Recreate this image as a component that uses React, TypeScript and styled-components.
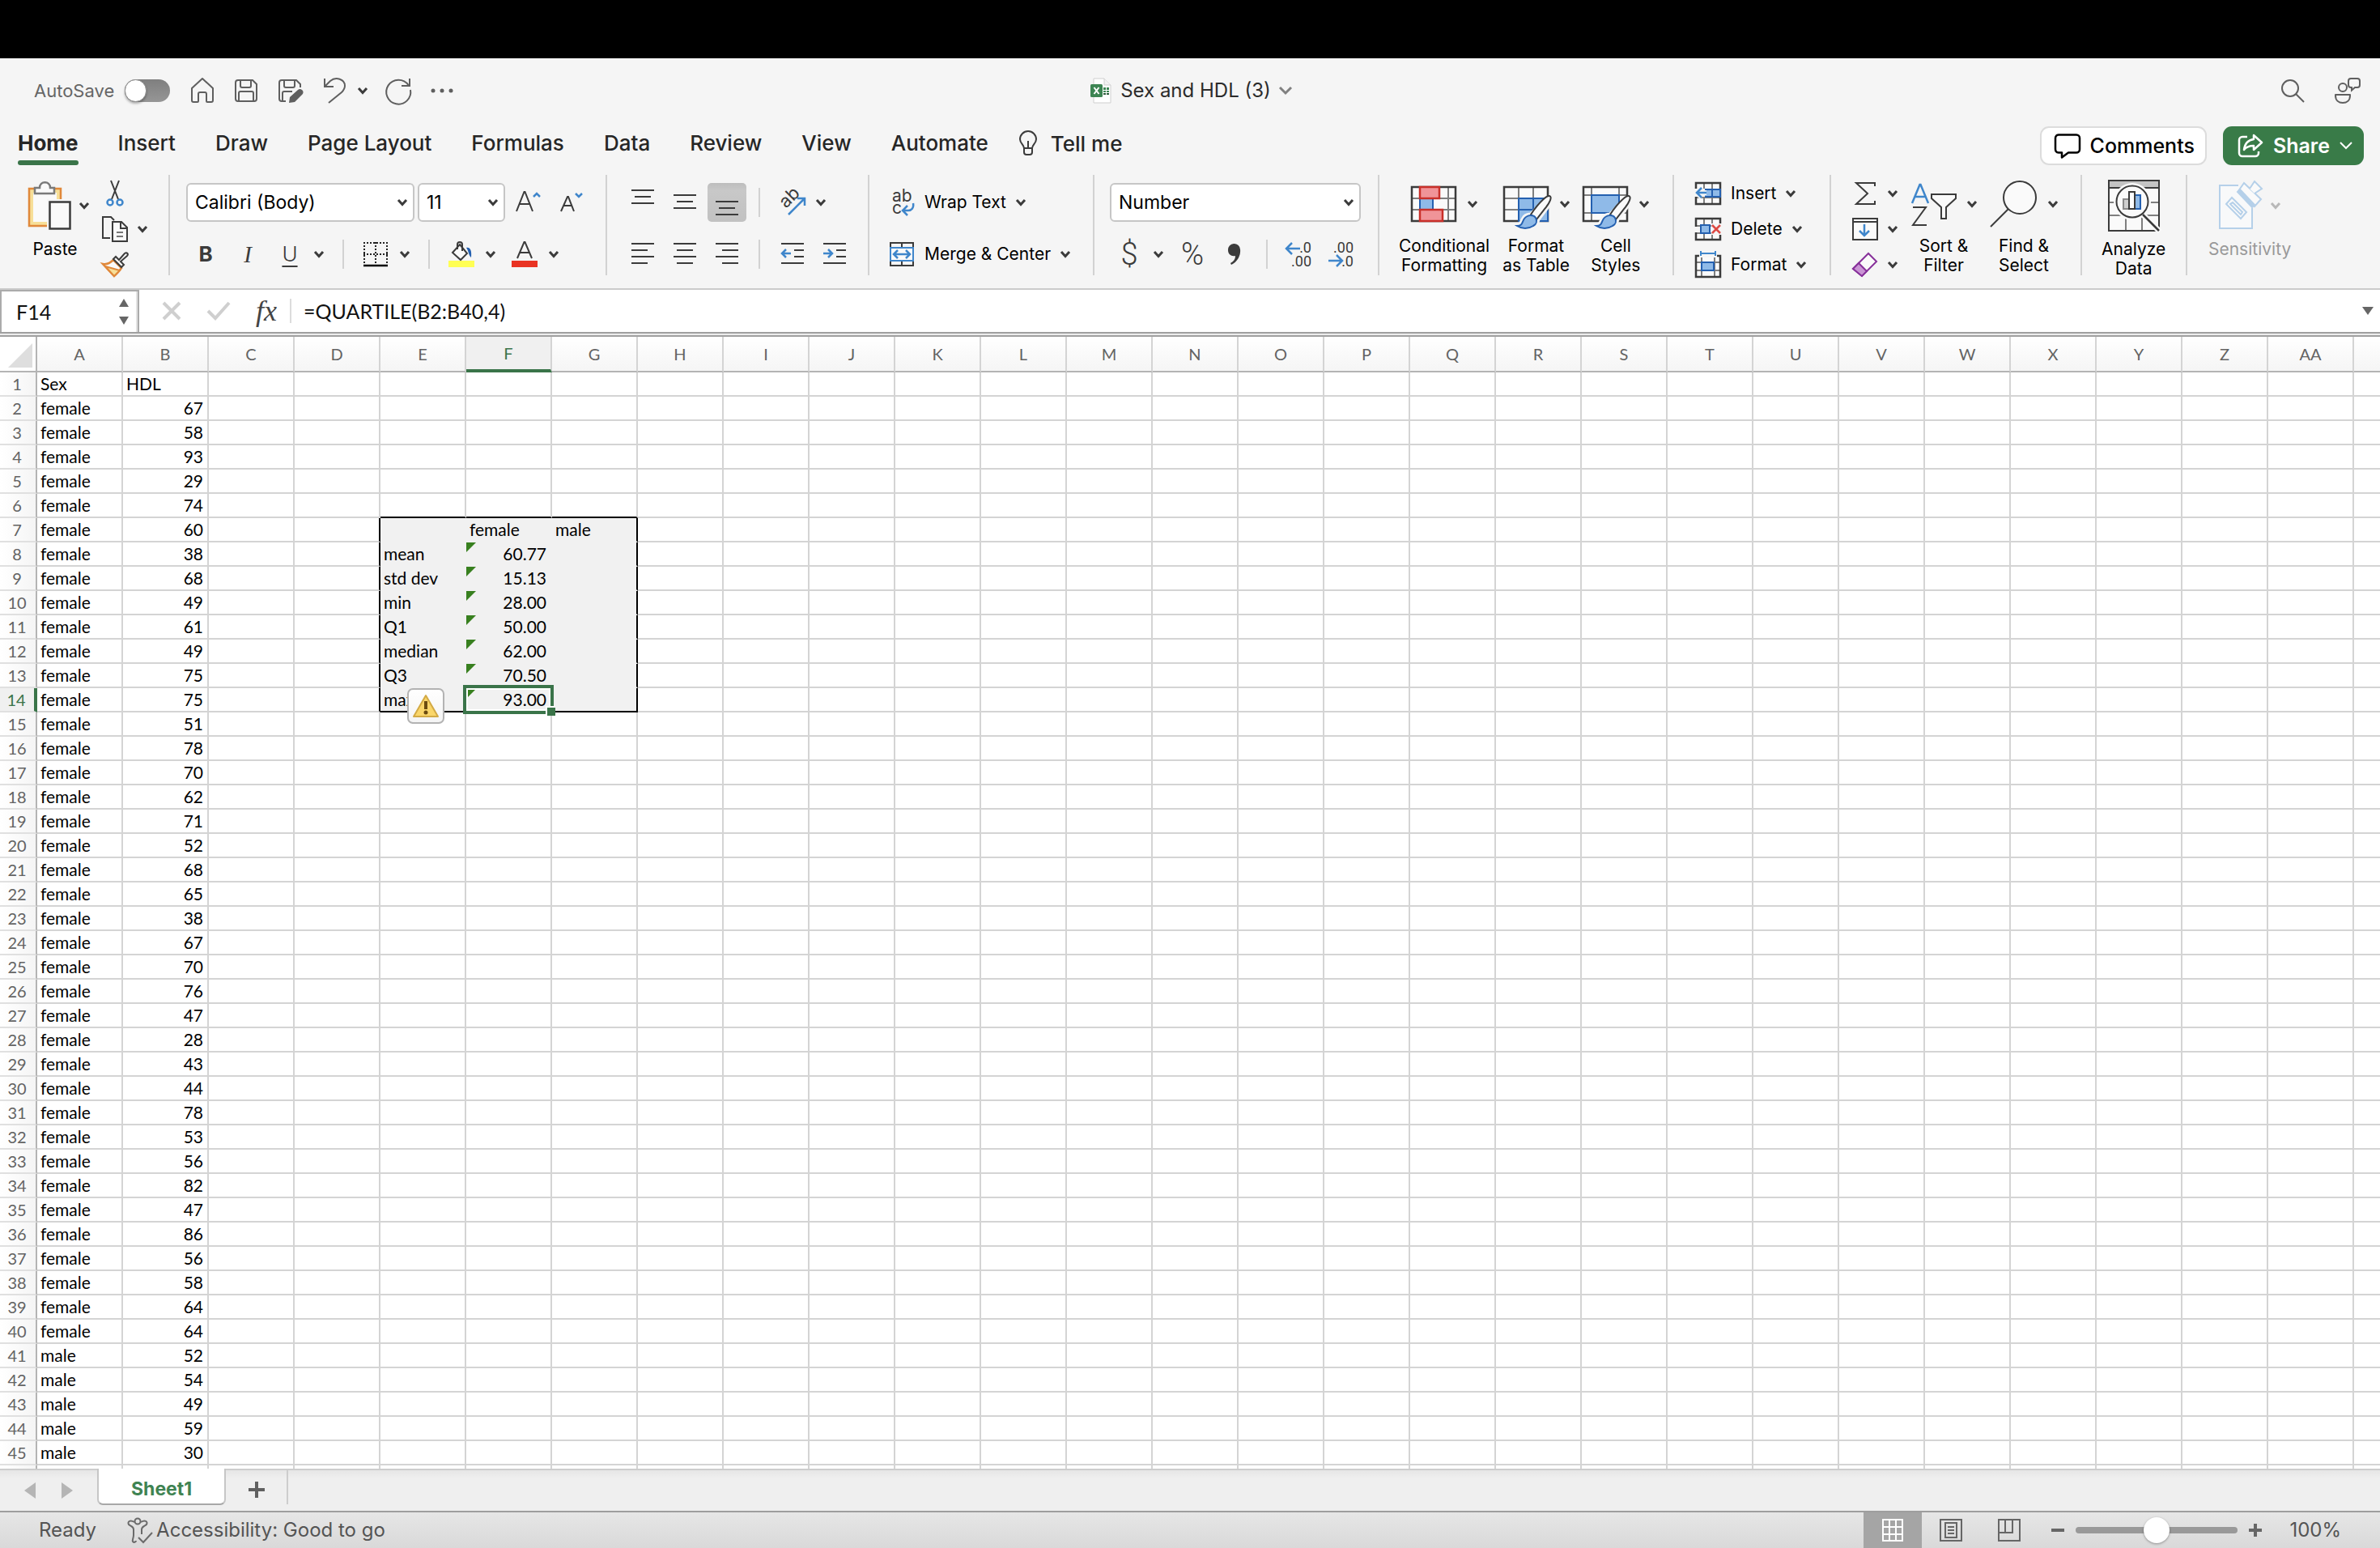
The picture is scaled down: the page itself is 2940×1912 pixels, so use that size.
import React, { ReactNode } from "react";
import styled, { createGlobalStyle, css } from "styled-components";

const INK = "#3b3b3b";
const GREEN = "#3a7449";
const BLUE = "#3f86cb";
const NAVY = "#2460b0";
const SKY = "#8fbae8";
const UI = `Inter, "Liberation Sans", sans-serif`;
const SHEET = `Lato, "Open Sans", sans-serif`;

const GlobalStyle = createGlobalStyle`
  *, *::before, *::after { box-sizing: border-box; }
  html, body { margin: 0; padding: 0; background: #000; }
  body { overflow: hidden; font-family: ${UI}; }
  button, input, select { font: inherit; margin: 0; }
  button { border: 0; padding: 0; background: none; color: inherit; }
  svg { display: block; flex: none; overflow: visible; }
`;

/* ---------- window ---------- */

const Window = styled.div`
  display: flex;
  flex-direction: column;
  height: 100vh;
  padding-top: 72px;
  background: #000;
`;

const Chrome = styled.header`
  flex: none;
  background: #f5f5f5;
  border-bottom: 2px solid #cbcbcb;
`;

const TitleBar = styled.div`
  display: grid;
  grid-template-columns: 1fr auto 1fr;
  align-items: center;
  height: 80px;
  padding: 0 24px;
`;

const QuickAccess = styled.div`
  display: flex;
  align-items: center;
  gap: 22px;
  padding-left: 18px;
`;

const AutoSave = styled.label`
  display: flex;
  align-items: center;
  gap: 13px;
  padding-right: 2px;
  font-size: 22px;
  line-height: 28px;
  color: #666;
`;

const Toggle = styled.input`
  appearance: none;
  width: 56px;
  height: 28px;
  border-radius: 14px;
  background: linear-gradient(#7f7f7f, #969696);
  &::before {
    content: "";
    display: block;
    width: 27px;
    height: 28px;
    border: 1px solid #8a8a8a;
    border-radius: 14px;
    background: #fff;
    box-shadow: 0 2px 3px rgba(0, 0, 0, 0.3);
  }
`;

const IconButton = styled.button`
  display: flex;
  align-items: center;
  gap: 14px;
`;

const DocTitle = styled.button`
  display: flex;
  align-items: center;
  gap: 10px;
  padding-left: 2px;
  font-size: 24px;
  line-height: 32px;
  color: #2b2b2b;
`;

const TitleActions = styled.div`
  display: flex;
  justify-content: flex-end;
  gap: 36px;
`;

/* ---------- ribbon tabs ---------- */

const TabRow = styled.nav`
  display: flex;
  align-items: flex-start;
  justify-content: space-between;
  padding: 4px 20px 12px 22px;
`;

const TabList = styled.div`
  display: flex;
  gap: 49px;
`;

const Tab = styled.button<{ $active?: boolean }>`
  display: flex;
  flex-direction: column;
  font-size: 26px;
  line-height: 42px;
  font-weight: ${(p) => (p.$active ? 700 : 500)};
  color: #262626;
  &::after {
    content: "";
    align-self: stretch;
    height: 6px;
    border-radius: 3px;
    background: ${(p) => (p.$active ? GREEN : "transparent")};
  }
`;

const TellMe = styled.button`
  display: flex;
  align-items: center;
  gap: 16px;
  margin-left: -12px;
  height: 42px;
  font-size: 26px;
  font-weight: 500;
  color: #262626;
`;

const Actions = styled.div`
  display: flex;
  gap: 20px;
`;

const ActionButton = styled.button<{ $primary?: boolean }>`
  display: flex;
  align-items: center;
  gap: 12px;
  height: 48px;
  padding: 0 14px 0 18px;
  border-radius: 11px;
  font-size: 25px;
  line-height: 32px;
  ${(p) =>
    p.$primary
      ? css`
          background: #397b48;
          color: #fff;
          font-weight: 600;
        `
      : css`
          background: #fff;
          color: #000;
          font-weight: 500;
          border: 2px solid #dcdcdc;
          padding: 0 13px 0 16px;
        `}
`;

/* ---------- ribbon ---------- */

const Ribbon = styled.div`
  display: flex;
  align-items: flex-start;
  height: 140px;
`;

const Group = styled.section<{ $width?: number; $pad?: number; $last?: boolean }>`
  display: flex;
  flex: none;
  width: ${(p) => (p.$width ? p.$width + "px" : "auto")};
  height: 124px;
  padding-left: ${(p) => p.$pad ?? 20}px;
  gap: 16px;
  border-right: ${(p) => (p.$last ? 0 : 2)}px solid #d2d2d2;
`;

const TwoRows = styled.div`
  display: flex;
  flex-direction: column;
  gap: 16px;
  padding-top: 10px;
`;

const ThreeRows = styled.div`
  display: flex;
  flex-direction: column;
  gap: 16px;
  padding-top: 9px;
`;

const Tools = styled.div`
  display: flex;
  align-items: center;
  gap: 4px;
  height: 48px;
`;

const ToolButton = styled.button<{ $active?: boolean }>`
  display: flex;
  align-items: center;
  gap: 14px;
  height: 48px;
  padding: 0 8px;
  border-radius: 5px;
  background: ${(p) => (p.$active ? "linear-gradient(#bdbdbd, #c8c8c8 20%, #c1c1c1)" : "none")};
  color: ${INK};
`;

const Glyph = styled.span<{ $kind: "bold" | "italic" | "underline" | "symbol" }>`
  width: 32px;
  text-align: center;
  line-height: 32px;
  ${(p) =>
    ({
      bold: css`
        font-size: 26px;
        font-weight: 700;
      `,
      italic: css`
        font-family: "Liberation Serif", serif;
        font-size: 29px;
        font-style: italic;
      `,
      underline: css`
        font-size: 26px;
        font-weight: 300;
        text-decoration: underline;
        text-decoration-thickness: 2px;
        text-underline-offset: 5px;
      `,
      symbol: css`
        font-family: Roboto, sans-serif;
        font-size: 38px;
        font-weight: 300;
      `,
    })[p.$kind]}
`;

const Divider = styled.span`
  width: 2px;
  height: 36px;
  margin: 0 11px;
  background: #d2d2d2;
`;

const RowButton = styled.button<{ $small?: boolean }>`
  display: flex;
  align-items: center;
  gap: 12px;
  height: ${(p) => (p.$small ? 28 : 48)}px;
  padding-left: ${(p) => (p.$small ? 0 : 4)}px;
  font-size: 21px;
  line-height: 24px;
  color: #000;
`;

const SmallSplit = styled.button`
  display: flex;
  align-items: center;
  gap: 12px;
  height: 28px;
`;

const BigButton = styled.button`
  display: flex;
  flex-direction: column;
  align-items: center;
  gap: 10px;
  height: 124px;
  padding-top: 6px;
  font-size: 21px;
  line-height: 24px;
  color: #000;
  &:disabled { color: #999; }
`;

const BigIcon = styled.span`
  display: flex;
  align-items: center;
  gap: 10px;
  height: 64px;
`;

const BigLabel = styled.span<{ $inset: number }>`
  padding-right: ${(p) => p.$inset}px;
`;

const SelectBox = styled.span<{ $width: number }>`
  display: grid;
  align-items: center;
  width: ${(p) => p.$width}px;
  height: 48px;
  border: 2px solid #c6c6c6;
  border-radius: 6px;
  background: #fff;
  > * { grid-area: 1 / 1; }
  > svg { justify-self: end; margin-right: 7px; pointer-events: none; }
`;

const Select = styled.select`
  appearance: none;
  width: 100%;
  height: 44px;
  padding: 0 24px 0 9px;
  border: 0;
  border-radius: 6px;
  background: transparent;
  font-size: 23px;
  color: #000;
`;

/* ---------- formula bar ---------- */

const FormulaBar = styled.div`
  display: flex;
  flex: none;
  align-items: center;
  height: 52px;
  background: #fff;
`;

const NameBox = styled.div`
  display: flex;
  align-items: center;
  justify-content: space-between;
  width: 172px;
  height: 52px;
  padding: 0 11px 0 18px;
  border: 2px solid #ababab;
  border-bottom: 0;
  box-shadow: inset -2px 0 #e2e2e2;
`;

const BarInput = styled.input<{ $width?: number }>`
  flex: ${(p) => (p.$width ? "none" : 1)};
  width: ${(p) => (p.$width ? p.$width + "px" : "auto")};
  height: 40px;
  padding: 0;
  border: 0;
  background: transparent;
  font-family: ${SHEET};
  font-size: 25px;
  color: #111;
`;

const BarTools = styled.div`
  display: flex;
  align-items: center;
  gap: 32px;
  padding: 0 16px 0 28px;
`;

const BarDivider = styled.span`
  width: 2px;
  height: 30px;
  margin-right: 15px;
  background: #dcdcdc;
`;

const Fx = styled.button`
  font-family: "Liberation Serif", serif;
  font-style: italic;
  font-size: 36px;
  line-height: 36px;
  color: #444;
`;

const BarEnd = styled.button`
  padding: 0 8px;
`;

const Splitter = styled.div`
  flex: none;
  height: 6px;
  border-top: 2px solid #a0a0a0;
  border-bottom: 2px solid #a0a0a0;
  background: #ececec;
`;

/* ---------- grid ---------- */

const Sheet = styled.main`
  flex: 1;
  min-height: 0;
  overflow: hidden;
  background: #fff;
`;

const Grid = styled.table`
  table-layout: fixed;
  width: 3014px;
  border-collapse: separate;
  border-spacing: 0;
  font-family: ${SHEET};
  font-size: 21px;
  line-height: 28px;
  color: #000;
`;

const HeadCol = styled.col`
  width: 46px;
`;

const BodyCol = styled.col`
  width: 106px;
`;

const Corner = styled.td`
  height: 44px;
  padding: 0 4px 4px 10px;
  vertical-align: bottom;
  border-right: 2px solid #b4b4b4;
  border-bottom: 2px solid #b4b4b4;
`;

const ColHead = styled.th<{ $active: boolean }>`
  height: 44px;
  padding: 0;
  font-size: 20px;
  font-weight: 400;
  color: ${(p) => (p.$active ? GREEN : "#636363")};
  background: ${(p) => (p.$active ? "#f0f0f0" : "linear-gradient(#fff, #f5f5f5)")};
  border-right: 2px solid #d4d4d4;
  border-bottom: ${(p) => (p.$active ? `4px solid ${GREEN}` : "2px solid #b4b4b4")};
`;

const RowHead = styled.th<{ $active: boolean }>`
  height: 30px;
  padding: 0 2px 0 0;
  font-size: 20px;
  font-weight: 400;
  color: ${(p) => (p.$active ? GREEN : "#636363")};
  background: ${(p) => (p.$active ? "#f0f0f0" : "linear-gradient(90deg, #fff, #f5f5f5)")};
  border-right: ${(p) => (p.$active ? `4px solid ${GREEN}` : "2px solid #b4b4b4")};
  border-bottom: 2px solid #e0e0e0;
`;

const Cell = styled.td<{ $right: string; $bottom: string; $fill: boolean; $num: boolean }>`
  position: relative;
  height: 30px;
  padding: 0 5px 0 4px;
  white-space: nowrap;
  text-align: ${(p) => (p.$num ? "right" : "left")};
  background: ${(p) => (p.$fill ? "#f1f1f1" : "#fff")};
  border-right: 2px solid ${(p) => p.$right};
  border-bottom: 2px solid ${(p) => p.$bottom};
`;

const ErrorMark = styled.i<{ $small?: boolean }>`
  position: absolute;
  top: ${(p) => (p.$small ? 2 : 0)}px;
  left: ${(p) => (p.$small ? 2 : 0)}px;
  width: ${(p) => (p.$small ? 9 : 12)}px;
  height: ${(p) => (p.$small ? 9 : 12)}px;
  background: #38801f;
  clip-path: polygon(0 0, 100% 0, 0 100%);
`;

const Selection = styled.span`
  position: absolute;
  inset: -4px;
  z-index: 1;
  border: 4px solid ${GREEN};
  box-shadow: inset 0 0 0 2px #fff;
  &::after {
    content: "";
    position: absolute;
    right: -6px;
    bottom: -6px;
    width: 12px;
    height: 12px;
    background: ${GREEN};
    border-top: 2px solid #fff;
    border-left: 2px solid #fff;
  }
`;

const SmartTag = styled.button`
  position: absolute;
  top: 0;
  left: 33px;
  z-index: 2;
  display: grid;
  place-items: center;
  width: 46px;
  height: 44px;
  border: 2px solid #b3b3b3;
  border-radius: 7px;
  background: linear-gradient(#fff, #f4f4f4);
`;

/* ---------- sheet tabs and status bar ---------- */

const SheetBar = styled.div`
  display: flex;
  flex: none;
  align-items: flex-start;
  height: 52px;
  border-top: 2px solid #cdcdcd;
  background: linear-gradient(#e6e6e6, #efefef 10px);
`;

const SheetNav = styled.div`
  display: flex;
  align-items: center;
  gap: 32px;
  height: 50px;
  padding: 0 30px;
`;

const SheetTab = styled.button`
  height: 45px;
  margin-top: -2px;
  padding: 7px 40px 0;
  border: 2px solid #c6c6c6;
  border-top: 0;
  border-bottom-color: #a8a8a8;
  border-radius: 0 0 7px 7px;
  background: #fff;
  font-size: 23px;
  line-height: 28px;
  font-weight: 700;
  color: #3f8352;
`;

const AddSheet = styled.button`
  display: grid;
  place-items: center;
  width: 77px;
  height: 42px;
  padding-top: 5px;
  border-right: 2px solid #cdcdcd;
`;

const StatusBar = styled.footer`
  display: flex;
  flex: none;
  align-items: center;
  height: 46px;
  padding: 0 48px;
  border-top: 2px solid #9e9e9e;
  background: linear-gradient(#e6e6e6, #d9d9d9);
  font-size: 24px;
  line-height: 28px;
  color: #545454;
`;

const StatusItem = styled.button`
  display: flex;
  align-items: center;
  gap: 4px;
  margin-left: 38px;
`;

const StatusRight = styled.div`
  display: flex;
  align-items: center;
  margin-left: auto;
`;

const ViewButton = styled.button<{ $active?: boolean }>`
  display: grid;
  place-items: center;
  width: 72px;
  height: 44px;
  background: ${(p) => (p.$active ? "#a5a5a5" : "none")};
`;

const ZoomGroup = styled.div`
  display: flex;
  align-items: center;
  gap: 14px;
  margin-left: 16px;
`;

const Slider = styled.input`
  appearance: none;
  width: 200px;
  height: 32px;
  background: transparent;
  &::-webkit-slider-runnable-track {
    height: 8px;
    border-radius: 4px;
    background: #999;
  }
  &::-webkit-slider-thumb {
    appearance: none;
    width: 32px;
    height: 32px;
    margin-top: -12px;
    border-radius: 50%;
    background: #fff;
    box-shadow: 0 1px 3px rgba(0, 0, 0, 0.35);
  }
`;

const ZoomValue = styled.output`
  margin-left: 34px;
`;

/* ---------- icons ---------- */

type IconProps = { w: number; h: number; sw?: number; color?: string; children: ReactNode };

const Icon = ({ w, h, sw = 2, color = INK, children }: IconProps) => (
  <svg width={w} height={h} viewBox={`0 0 ${w} ${h}`} fill="none" stroke={color} strokeWidth={sw} aria-hidden="true">
    {children}
  </svg>
);

const Chevron = ({ color = INK }: { color?: string }) => (
  <Icon w={12} h={8} sw={3} color={color}>
    <path d="M1 1l5 5.500L11 1" />
  </Icon>
);

const WideChevron = ({ color, sw = 3 }: { color: string; sw?: number }) => (
  <Icon w={16} h={10} sw={sw} color={color}>
    <path d="M1 1l7 7 7-7" />
  </Icon>
);

const T = "#5f5f5f";

const HomeIcon = () => (
  <Icon w={32} h={32} color={T}>
    <path d="M3 13L16 1l13 12v15a2 2 0 0 1-2 2h-5a1 1 0 0 1-1-1v-9a2 2 0 0 0-2-2h-6a2 2 0 0 0-2 2v9a1 1 0 0 1-1 1H5a2 2 0 0 1-2-2z" strokeLinejoin="round" />
  </Icon>
);

const SaveIcon = () => (
  <Icon w={32} h={32} color={T}>
    <path d="M3 6a3 3 0 0 1 3-3h18l5 5v18a3 3 0 0 1-3 3H6a3 3 0 0 1-3-3z" />
    <path d="M9 3v7a2 2 0 0 0 2 2h9a2 2 0 0 0 2-2V3M7 29V19a2 2 0 0 1 2-2h14a2 2 0 0 1 2 2v10" />
  </Icon>
);

const SaveAsIcon = () => (
  <Icon w={32} h={32} color={T}>
    <path d="M11 29H6a3 3 0 0 1-3-3V6a3 3 0 0 1 3-3h18l5 5v4" />
    <path d="M9 3v7a2 2 0 0 0 2 2h9a2 2 0 0 0 2-2V3M7 29V19a2 2 0 0 1 2-2h10" />
    <path d="M15 31l1-7 10-9a4 4 0 0 1 6 5L22 30z" fill={T} stroke="none" />
  </Icon>
);

const UndoIcon = () => (
  <Icon w={32} h={32} color={T}>
    <path d="M5 1v10h11M5 11l7-7c7-6 18-2 18 6 0 4-2 6-4 8L10 31" />
  </Icon>
);

const RedoIcon = () => (
  <Icon w={32} h={32} color={T}>
    <path d="M30 1v9H20M28.500 9A15 15 0 1 0 31 15" />
  </Icon>
);

const MoreIcon = () => (
  <Icon w={32} h={32} color="none">
    <g fill={T}>
      <circle cx="5" cy="16" r="2.500" />
      <circle cx="16" cy="16" r="2.500" />
      <circle cx="27" cy="16" r="2.500" />
    </g>
  </Icon>
);

const WorkbookIcon = () => (
  <Icon w={28} h={32} color="none">
    <path d="M5 1h13l8 8v22H5z" fill="#fff" stroke="#cfcfcf" strokeWidth="1" />
    <path d="M18 1v8h8" fill="#f2f2f2" stroke="#cfcfcf" strokeWidth="1" />
    <g fill="#3d8553">
      <path d="M17 12h3v3h-3zM21 12h3v3h-3zM17 16h3v2h-3zM21 16h3v2h-3z" />
      <path d="M17 19h3v2h-3zM21 19h3v2h-3z" fill="#2a5b3a" />
    </g>
    <rect x="1" y="8" width="15" height="16" rx="1.500" fill="#3d8553" />
    <path d="M5.500 12l6 8M11.500 12l-6 8" stroke="#fff" strokeWidth="2" />
  </Icon>
);

const SearchIcon = () => (
  <Icon w={32} h={32} color={T}>
    <circle cx="13" cy="13" r="10" />
    <path d="M20 20l10 10" />
  </Icon>
);

const PersonIcon = () => (
  <Icon w={32} h={32} color={T}>
    <circle cx="10" cy="12" r="5" />
    <path d="M1 21h18v1c0 6-4 9-9 9s-9-3-9-9z" strokeLinejoin="round" />
    <path d="M20 1h8a3 3 0 0 1 3 3v5a3 3 0 0 1-3 3h-3l-4 3.500V12h-1a3 3 0 0 1-3-3V4a3 3 0 0 1 3-3z" />
  </Icon>
);

const BulbIcon = () => (
  <Icon w={24} h={32} color={INK}>
    <path d="M7 22c0-4-5-6-5-11a10 10 0 0 1 20 0c0 5-5 7-5 11zM7 22v5a3 3 0 0 0 3 3h4a3 3 0 0 0 3-3v-5M12 22v-9" />
  </Icon>
);

const CommentIcon = () => (
  <Icon w={32} h={30} color="#000" sw={2.5}>
    <path d="M5 1.500h22a4 4 0 0 1 4 4v14a4 4 0 0 1-4 4H17l-8 6v-6H5a4 4 0 0 1-4-4v-14a4 4 0 0 1 4-4z" strokeLinejoin="round" />
  </Icon>
);

const ShareIcon = () => (
  <Icon w={32} h={30} color="#fff" sw={2.5}>
    <path d="M12 4H6a4 4 0 0 0-4 4v16a4 4 0 0 0 4 4h16a4 4 0 0 0 4-4v-2" />
    <path d="M20 2l10 9-10 9v-5c-6 0-9 1-12 5 1-8 5-12 12-13z" strokeLinejoin="round" />
  </Icon>
);

const PasteIcon = () => (
  <Icon w={54} h={60} color="none">
    <path d="M2 9h39v46H2z" fill="#f7df98" stroke="#e0883a" strokeWidth="2.500" />
    <path d="M7 14h29v36H7z" fill="#fafafa" />
    <path d="M9 15V8h6c0-9 13-9 13 0h5v7z" fill="#fafafa" stroke="#7a7a7a" strokeWidth="2.500" />
    <path d="M24 22h30v38H24z" fill="#f5f5f5" />
    <path d="M27.500 25.500h25v33h-25z" fill="#fafafa" stroke={INK} strokeWidth="2.500" />
  </Icon>
);

const CutIcon = () => (
  <Icon w={32} h={32}>
    <path d="M11 0l9 23M21 0l-9 23" />
    <circle cx="10" cy="27" r="3.500" stroke={BLUE} strokeWidth="2.500" />
    <circle cx="22" cy="27" r="3.500" stroke={BLUE} strokeWidth="2.500" />
  </Icon>
);

const CopyIcon = () => (
  <Icon w={32} h={32}>
    <path d="M10 27H1V1h10l4 4" fill="none" />
    <path d="M13 7h11l7 7v17H13z" fill="#fafafa" />
    <path d="M23 7v8h8" />
    <path d="M18 20h8M18 25h8" stroke="#777" />
  </Icon>
);

const BrushIcon = () => (
  <Icon w={32} h={32}>
    <path d="M1 15c5 1 9-1 13-5l10 10c-3 4-5 7-9 10z" fill="#fafafa" stroke="#e0883a" strokeWidth="2.500" />
    <path d="M4 18l18 5-7 7z" fill="#f7df98" stroke="#e0883a" />
    <path d="M14 9l3-3 4 4 7-8c3-2 5 1 3 3l-8 7 4 4-3 3z" fill="#fafafa" />
  </Icon>
);

const FontStep = ({ big }: { big?: boolean }) => (
  <Icon w={32} h={32}>
    {big ? <path d="M2 27L11.500 3h1L22 27M6 18h12" /> : <path d="M5 27L13 9h1L21 27M8 20h10" />}
    <path d={big ? "M23 9l4-4 4 4" : "M23 5l4 4 4-4"} stroke={BLUE} strokeWidth="2.500" />
  </Icon>
);

const BordersIcon = () => (
  <Icon w={32} h={32} color="none">
    <path d="M1 2h30M1 16h30M2 1v26M16 1v26M30 1v26" stroke="#222" strokeWidth="2" strokeDasharray="2 2" />
    <path d="M1 30h30" stroke="#000" strokeWidth="2.500" />
  </Icon>
);

const FillIcon = () => (
  <Icon w={32} h={32}>
    <path d="M14 4l9 11-8 8L5 14z" fill="#fafafa" />
    <path d="M11 10V4c0-4 6-4 6 0v8" />
    <path d="M22 8c5-1 7 4 6 12-3-2-3-8-6-12z" fill={NAVY} stroke="none" />
    <path d="M0 24h32v8H0z" fill="#ffff54" stroke="none" />
  </Icon>
);

const FontColorIcon = () => (
  <Icon w={32} h={32}>
    <path d="M7 21L15.500 1h1L25 21M10 14h12" />
    <path d="M0 24h32v8H0z" fill="#e93323" stroke="none" />
  </Icon>
);

const LinesIcon = ({ lines, y = 2 }: { lines: [number, number][]; y?: number }) => (
  <Icon w={32} h={32}>
    {lines.map(([x, w], i) => (
      <path key={i} d={`M${x} ${y + i * 8}h${w}`} />
    ))}
  </Icon>
);

const OrientIcon = () => (
  <Icon w={32} h={32}>
    <text x="0" y="0" transform="translate(9 24) rotate(-45)" fontSize="22" fontFamily="Inter, sans-serif" fill={INK} stroke="none">ab</text>
    <path d="M12 31l19-19M23 11h9v9" stroke={BLUE} strokeWidth="2.500" />
  </Icon>
);

const IndentIcon = ({ into }: { into?: boolean }) => (
  <Icon w={32} h={32}>
    <path d="M3 3h28M19 11h12M19 19h12M3 27h28" />
    <path d={into ? "M3 15h11M9 10l5 5-5 5" : "M15 15H4M9 10l-5 5 5 5"} stroke={BLUE} strokeWidth="2.500" />
  </Icon>
);

const WrapIcon = () => (
  <Icon w={32} h={32}>
    <text x="4" y="15" fontSize="21" fontFamily="Inter, sans-serif" fill={INK} stroke="none">ab</text>
    <text x="4" y="30" fontSize="21" fontFamily="Inter, sans-serif" fill={INK} stroke="none">c</text>
    <path d="M30 17c1 6-2 9-6 9h-6M23 20l-6 6 6 6" stroke={BLUE} strokeWidth="2.500" />
  </Icon>
);

const MergeIcon = () => (
  <Icon w={32} h={32}>
    <path d="M2 2h28v28H2zM16 2v28" />
    <path d="M2 8h28v16H2z" fill="#fafafa" stroke={BLUE} />
    <path d="M6 16h20M11 11l-5 5 5 5M21 11l5 5-5 5" stroke={BLUE} strokeWidth="2.500" />
  </Icon>
);

const DecimalIcon = ({ less }: { less?: boolean }) => (
  <Icon w={32} h={32}>
    <g fontSize="18" fontFamily="Roboto, sans-serif" fill={INK} stroke="none" textAnchor="end">
      <text x="31" y="14">{less ? ".00" : ".0"}</text>
      <text x="31" y="31">{less ? ".0" : ".00"}</text>
    </g>
    <path d={less ? "M0 24h16M10 17l7 7-7 7" : "M17 9H1M7 2L0 9l7 7"} stroke={BLUE} strokeWidth="2.500" />
  </Icon>
);

const CondIcon = () => (
  <Icon w={60} h={52} color="none">
    <path d="M1 5h54v42H1z" fill="#fafafa" />
    <path d="M46 5v42M1 19h54M1 33h54M11 5v42" stroke="#7f7f7f" strokeWidth="2" />
    <path d="M1 5h54v42H1z" stroke={INK} strokeWidth="2.500" />
    <path d="M28 20h17v12H28z" fill="#fafafa" />
    <path d="M11 19h16v14H11z" fill={SKY} stroke={NAVY} strokeWidth="2" />
    <path d="M11 5h24v14H11zM11 33h28v14H11z" fill="#f09498" stroke="#c9302a" strokeWidth="2.500" />
  </Icon>
);

const PaintBrush = () => (
  <g>
    <path d="M58 20c3 1 2 4 0 7L43 47c-2 10-12 14-25 9 5-3 4-7 8-12 2-2 5-3 8-3l18-18z" fill="#f5f5f5" stroke="#f5f5f5" strokeWidth="5" />
    <path d="M34 41c5-8 18-24 23-23 4 1 0 9-5 15L41 47z" fill="#fafafa" stroke={INK} strokeWidth="2" />
    <path d="M17 55c7 0 6-5 9-9 4-5 11-5 14-1 2 4 1 8-3 10-6 4-14 4-20 0z" fill={SKY} stroke={NAVY} strokeWidth="2" />
  </g>
);

const TableIcon = () => (
  <Icon w={60} h={56} color="none">
    <path d="M1 7h54v42H1z" fill="#fafafa" />
    <path d="M1 21h54M1 35h19M19 7v42M37 7v14" stroke="#7f7f7f" strokeWidth="2" />
    <path d="M1 7h54v42H1z" stroke={INK} strokeWidth="2.500" />
    <path d="M19 21h36v28H19zM37 21v28M19 35h36" fill={SKY} stroke={NAVY} strokeWidth="2" />
    <PaintBrush />
  </Icon>
);

const CellStyleIcon = () => (
  <Icon w={60} h={56} color="none">
    <path d="M1 7h54v42H1z" fill="#fafafa" />
    <path d="M1 17h54M1 39h54M11 7v42M45 7v42" stroke="#7f7f7f" strokeWidth="2" />
    <path d="M1 7h54v42H1z" stroke={INK} strokeWidth="2.500" />
    <path d="M11 17h34v22H11z" fill={SKY} stroke={NAVY} strokeWidth="2" />
    <PaintBrush />
  </Icon>
);

const Lattice = () => (
  <g>
    <path d="M1 1h30v26H1z" fill="#fafafa" />
    <path d="M11 1v26M21 1v26M1 10h30M1 19h30" stroke="#7f7f7f" />
    <path d="M1 1h30v26H1z" stroke={INK} strokeWidth="2.500" />
  </g>
);

const InsertIcon = () => (
  <Icon w={32} h={28}>
    <Lattice />
    <path d="M-1 8h15v10H-1z" fill="#f5f5f5" stroke="none" />
    <path d="M12 9h19v9H12M21 9v9" fill={SKY} stroke={NAVY} />
    <path d="M14 13H2M8 7l-6 6 6 6" stroke="#f5f5f5" strokeWidth="6" />
    <path d="M14 13H2M8 7l-6 6 6 6" stroke={BLUE} strokeWidth="2.500" />
  </Icon>
);

const DeleteIcon = () => (
  <Icon w={32} h={28}>
    <Lattice />
    <path d="M-1 11h34v7H-1z" fill="#f5f5f5" stroke="none" />
    <path d="M7 9h11v10H7z" fill={SKY} stroke={NAVY} />
    <path d="M20 7h13v14H20z" fill="#f5f5f5" stroke="none" />
    <path d="M21 9l10 10M31 9L21 19" stroke="#dc4a44" strokeWidth="2.500" />
  </Icon>
);

const FormatIcon = () => (
  <Icon w={32} h={32}>
    <path d="M1 5h30v26H1z" fill="#fafafa" />
    <path d="M8 5v26M24 5v26M1 13h30M1 23h30" stroke="#7f7f7f" />
    <path d="M1 5h30v26H1z" strokeWidth="2.500" />
    <path d="M5 2h22v5H5z" fill="#f5f5f5" stroke="none" />
    <path d="M8 13h15v10H8z" fill={SKY} stroke={NAVY} />
    <path d="M7 2h18M7-1v6M25-1v6" stroke={BLUE} />
  </Icon>
);

const SumIcon = () => (
  <Icon w={32} h={28}>
    <path d="M28 5V1H5l14 13L5 27h23v-4" />
  </Icon>
);

const FillDownIcon = () => (
  <Icon w={32} h={28}>
    <path d="M1 1h30v26H1zM1 5h30" fill="#fafafa" />
    <path d="M15 8v14M9 16l6 6 6-6" stroke={BLUE} strokeWidth="2.500" />
  </Icon>
);

const EraserIcon = () => (
  <Icon w={32} h={32} color="#87309a">
    <path d="M20 2l10 10-18 18L1 21z" fill="#fafafa" />
    <path d="M8 14l10 10-6 6L1 21z" fill="#c994d4" />
  </Icon>
);

const SortIcon = () => (
  <Icon w={60} h={52}>
    <path d="M2 25L11.500 2h1L22 25M6 17h12" stroke={BLUE} strokeWidth="2.500" />
    <path d="M3 30h16L3 52h17" />
    <path d="M26 14h30v5L44 30v14h-6V30L26 19z" fill="#fafafa" />
  </Icon>
);

const FindIcon = () => (
  <Icon w={62} h={58}>
    <circle cx="37" cy="21" r="20" fill="#fafafa" />
    <path d="M23 35L1 57" />
  </Icon>
);

const AnalyzeIcon = () => (
  <Icon w={64} h={64}>
    <path d="M1 1h62v62H1z" fill="#fafafa" />
    <path d="M2 2h60v8H2z" fill="#c4c4c4" stroke="none" />
    <path d="M1 28h62M1 44h62M22 44v19M42 44v19" stroke="#7f7f7f" />
    <path d="M1 10h62M1 1h62v62H1z" />
    <circle cx="30" cy="27" r="23" fill="#fafafa" stroke="none" />
    <path d="M42 42l22 22" stroke="#fafafa" strokeWidth="7" />
    <circle cx="30" cy="27" r="19.500" />
    <path d="M43 43l20 20" strokeWidth="2.500" />
    <path d="M19 24h7v12h-7z" fill="#cfcfcf" stroke="#8a8a8a" />
    <path d="M33 19h7v17h-7z" fill={SKY} stroke={NAVY} />
    <path d="M26 15h7v21h-7z" fill="#fff" />
  </Icon>
);

const SensitivityIcon = () => (
  <Icon w={54} h={60} color="#b5d0e9">
    <path d="M24 5H1v53h40V33" fill="#f8f9fa" />
    <path d="M16 20L34 38 27 46 9 28z" fill="#fafafa" />
    <path d="M17 26L29 38 27 41 14 28z" />
    <path d="M31 2l21 20-8 9L24 12z" fill="#fafafa" />
    <path d="M26 10l18 19-3 3L23 13z" fill="#b5d0e9" />
    <path d="M38 9l6-9 9 9-9 6" fill="#fafafa" />
  </Icon>
);

const WarnIcon = () => (
  <Icon w={34} h={30} color="none">
    <path d="M17 2l15 26H2z" fill="#fad66a" stroke="#d3aa45" strokeWidth="2" strokeLinejoin="round" />
    <path d="M15 9h4v10h-4z" fill="#6b4b10" />
    <circle cx="17" cy="23" r="2.500" fill="#6b4b10" />
  </Icon>
);

const A11yIcon = () => (
  <Icon w={32} h={32} color="#6a6a6a">
    <circle cx="13" cy="5" r="3.500" />
    <path d="M9 6C4 3 0 5 2 9c2 2 6 2 6 6v7c0 4-2 6-1 8 2 2 4 0 4-1" />
    <path d="M17 6c5-3 9-1 7 3-2 2-6 2-6 6v6M14 25l6 6 11-12" />
  </Icon>
);

const GridViewIcon = () => (
  <Icon w={26} h={28} color="#fff">
    <path d="M1 1h24v26H1zM9 1v26M17 1v26M1 10h24M1 19h24" />
  </Icon>
);

const PageViewIcon = () => (
  <Icon w={28} h={28} color="#666">
    <path d="M1 1h26v26H1zM7 5h14v18H7zM10 10h8M10 14h8M10 18h8" />
  </Icon>
);

const BreakViewIcon = () => (
  <Icon w={28} h={28} color="#666">
    <path d="M1 1h26v26H1zM1 17h17V1M9 1v16" />
  </Icon>
);

type TriangleProps = { dir: "down" | "left" | "right"; color?: string; w: number; h: number };

const Triangle = ({ dir, color = "#666", w, h }: TriangleProps) => {
  const points = {
    down: `0,0 ${w},0 ${w / 2},${h}`,
    left: `${w},0 0,${h / 2} ${w},${h}`,
    right: `0,0 ${w},${h / 2} 0,${h}`,
  }[dir];
  return (
    <Icon w={w} h={h} color="none">
      <polygon points={points} fill={color} />
    </Icon>
  );
};

/* ---------- data ---------- */

const HDL = [
  67, 58, 93, 29, 74, 60, 38, 68, 49, 61, 49, 75, 75, 51, 78, 70, 62, 71, 52, 68, 65, 38, 67, 70, 76, 47, 28, 43, 44,
  78, 53, 56, 82, 47, 86, 56, 58, 64, 64, 52, 54, 49, 59, 30,
];

const SUMMARY: Record<string, string> = {
  F7: "female", G7: "male",
  E8: "mean", F8: "60.77",
  E9: "std dev", F9: "15.13",
  E10: "min", F10: "28.00",
  E11: "Q1", F11: "50.00",
  E12: "median", F12: "62.00",
  E13: "Q3", F13: "70.50",
  E14: "max", F14: "93.00",
};

const COLUMNS = [..."ABCDEFGHIJKLMNOPQRSTUVWXYZ", "AA", ""];
const LAST_ROW = 45;
const ROWS = Array.from({ length: LAST_ROW + 1 }, (_, i) => i + 1);
const TABS = ["Home", "Insert", "Draw", "Page Layout", "Formulas", "Data", "Review", "View", "Automate"];

function valueAt(col: string, row: number): string {
  if (col === "A") return row === 1 ? "Sex" : row <= 40 ? "female" : row <= LAST_ROW ? "male" : "";
  if (col === "B") return row === 1 ? "HDL" : String(HDL[row - 2] ?? "");
  return SUMMARY[col + row] ?? "";
}

const inBox = (c: number, r: number) => c >= 4 && c <= 6 && r >= 7 && r <= 14;

function edge(inside: boolean, nextInside: boolean) {
  if (inside !== nextInside) return "#000";
  return inside ? "#f1f1f1" : "#d4d4d4";
}

/* ---------- pieces ---------- */

const Picker = ({ label, value, width }: { label: string; value: string; width: number }) => (
  <SelectBox $width={width}>
    <Select aria-label={label} defaultValue={value}>
      <option>{value}</option>
    </Select>
    <Chevron />
  </SelectBox>
);

const Tool = ({ label, split, active, children }: { label: string; split?: boolean; active?: boolean; children: ReactNode }) => (
  <ToolButton aria-label={label} $active={active}>
    {children}
    {split && <Chevron />}
  </ToolButton>
);

type BigProps = { icon: ReactNode; lines: string[]; split?: boolean; disabled?: boolean; inset?: number };

const Big = ({ icon, lines, split, disabled, inset = 0 }: BigProps) => (
  <BigButton disabled={disabled}>
    <BigIcon>
      {icon}
      {split && <Chevron color={disabled ? "#b8b8b8" : INK} />}
    </BigIcon>
    <BigLabel $inset={inset}>
      {lines.map((line, i) => (
        <React.Fragment key={line}>
          {i > 0 && <br />}
          {line}
        </React.Fragment>
      ))}
    </BigLabel>
  </BigButton>
);

const RibbonBody = () => (
  <Ribbon>
    <Group $width={210} $pad={34}>
      <Big icon={<PasteIcon />} lines={["Paste"]} split inset={8} />
      <ThreeRows>
        <SmallSplit aria-label="Cut"><CutIcon /></SmallSplit>
        <SmallSplit aria-label="Copy"><CopyIcon /><Chevron /></SmallSplit>
        <SmallSplit aria-label="Format painter"><BrushIcon /></SmallSplit>
      </ThreeRows>
    </Group>

    <Group $width={540}>
      <TwoRows>
        <Tools>
          <Picker label="Font" value="Calibri (Body)" width={282} />
          <Picker label="Font size" value="11" width={108} />
          <Tool label="Increase font size"><FontStep big /></Tool>
          <Tool label="Decrease font size"><FontStep /></Tool>
        </Tools>
        <Tools>
          <Tool label="Bold"><Glyph $kind="bold">B</Glyph></Tool>
          <Tool label="Italic"><Glyph $kind="italic">I</Glyph></Tool>
          <Tool label="Underline" split><Glyph $kind="underline">U</Glyph></Tool>
          <Divider />
          <Tool label="Borders" split><BordersIcon /></Tool>
          <Divider />
          <Tool label="Fill color" split><FillIcon /></Tool>
          <Tool label="Font color" split><FontColorIcon /></Tool>
        </Tools>
      </TwoRows>
    </Group>

    <Group $width={324}>
      <TwoRows>
        <Tools>
          <Tool label="Top align"><LinesIcon y={1} lines={[[2, 28], [6, 20], [2, 28]]} /></Tool>
          <Tool label="Middle align"><LinesIcon y={7} lines={[[2, 28], [6, 20], [2, 28]]} /></Tool>
          <Tool label="Bottom align" active><LinesIcon y={15} lines={[[2, 28], [6, 20], [2, 28]]} /></Tool>
          <Divider />
          <Tool label="Orientation" split><OrientIcon /></Tool>
        </Tools>
        <Tools>
          <Tool label="Align left"><LinesIcon y={3} lines={[[2, 28], [2, 20], [2, 28], [2, 20]]} /></Tool>
          <Tool label="Center"><LinesIcon y={3} lines={[[2, 28], [6, 20], [2, 28], [6, 20]]} /></Tool>
          <Tool label="Align right"><LinesIcon y={3} lines={[[2, 28], [10, 20], [2, 28], [10, 20]]} /></Tool>
          <Divider />
          <Tool label="Decrease indent"><IndentIcon /></Tool>
          <Tool label="Increase indent"><IndentIcon into /></Tool>
        </Tools>
      </TwoRows>
    </Group>

    <Group $width={278}>
      <TwoRows>
        <RowButton><WrapIcon />Wrap Text<Chevron /></RowButton>
        <RowButton><MergeIcon />Merge &amp; Center<Chevron /></RowButton>
      </TwoRows>
    </Group>

    <Group $width={352} $pad={19}>
      <TwoRows>
        <Tools>
          <Picker label="Number format" value="Number" width={310} />
        </Tools>
        <Tools>
          <Tool label="Currency" split><Glyph $kind="symbol">$</Glyph></Tool>
          <Tool label="Percent"><Glyph $kind="symbol">%</Glyph></Tool>
          <Tool label="Comma style">
            <Icon w={32} h={32} color="none">
              <path d="M8 11a7 7 0 0 1 15-1c1 8-4 16-11 19l-1-2c4-2 6-5 6-9-5 1-9-2-9-7z" fill={INK} />
            </Icon>
          </Tool>
          <Divider />
          <Tool label="Increase decimal"><DecimalIcon /></Tool>
          <Tool label="Decrease decimal"><DecimalIcon less /></Tool>
        </Tools>
      </TwoRows>
    </Group>

    <Group $width={364} $pad={24}>
      <Big icon={<CondIcon />} lines={["Conditional", "Formatting"]} split />
      <Big icon={<TableIcon />} lines={["Format", "as Table"]} split />
      <Big icon={<CellStyleIcon />} lines={["Cell", "Styles"]} split />
    </Group>

    <Group $width={194} $pad={26}>
      <ThreeRows>
        <RowButton $small><InsertIcon />Insert<Chevron /></RowButton>
        <RowButton $small><DeleteIcon />Delete<Chevron /></RowButton>
        <RowButton $small><FormatIcon />Format<Chevron /></RowButton>
      </ThreeRows>
    </Group>

    <Group $width={310} $pad={26}>
      <ThreeRows>
        <SmallSplit aria-label="AutoSum"><SumIcon /><Chevron /></SmallSplit>
        <SmallSplit aria-label="Fill"><FillDownIcon /><Chevron /></SmallSplit>
        <SmallSplit aria-label="Clear"><EraserIcon /><Chevron /></SmallSplit>
      </ThreeRows>
      <Big icon={<SortIcon />} lines={["Sort &", "Filter"]} split />
      <Big icon={<FindIcon />} lines={["Find &", "Select"]} split />
    </Group>

    <Group $width={130} $pad={24}>
      <Big icon={<AnalyzeIcon />} lines={["Analyze", "Data"]} />
    </Group>

    <Group $pad={26} $last>
      <Big icon={<SensitivityIcon />} lines={["Sensitivity"]} split disabled />
    </Group>
  </Ribbon>
);

const Spreadsheet = () => (
  <Sheet>
    <Grid>
      <colgroup>
        <HeadCol />
        {COLUMNS.map((c) => <BodyCol key={c} />)}
      </colgroup>
      <thead>
        <tr>
          <Corner>
            <Icon w={30} h={30} color="none"><path d="M30 0v30H0z" fill="#dedede" /></Icon>
          </Corner>
          {COLUMNS.map((c) => <ColHead key={c} scope="col" $active={c === "F"}>{c}</ColHead>)}
        </tr>
      </thead>
      <tbody>
        {ROWS.map((r) => (
          <tr key={r}>
            <RowHead scope="row" $active={r === 14}>{r <= LAST_ROW ? r : ""}</RowHead>
            {COLUMNS.map((col, c) => {
              const inside = inBox(c, r);
              const value = valueAt(col, r);
              const selected = col === "F" && r === 14;
              return (
                <Cell
                  key={col}
                  $fill={inside}
                  $num={value !== "" && !isNaN(Number(value))}
                  $right={edge(inside, inBox(c + 1, r))}
                  $bottom={edge(inside, inBox(c, r + 1))}
                >
                  {value}
                  {selected && <Selection />}
                  {col === "F" && r >= 8 && r <= 14 && <ErrorMark $small={selected} />}
                  {col === "E" && r === 14 && <SmartTag aria-label="Error checking"><WarnIcon /></SmartTag>}
                </Cell>
              );
            })}
          </tr>
        ))}
      </tbody>
    </Grid>
  </Sheet>
);

export default function App() {
  return (
    <Window>
      <GlobalStyle />
      <Chrome>
        <TitleBar>
          <QuickAccess>
            <AutoSave>AutoSave<Toggle type="checkbox" role="switch" /></AutoSave>
            <IconButton aria-label="Home"><HomeIcon /></IconButton>
            <IconButton aria-label="Save"><SaveIcon /></IconButton>
            <IconButton aria-label="Save as"><SaveAsIcon /></IconButton>
            <IconButton aria-label="Undo"><UndoIcon /><Chevron /></IconButton>
            <IconButton aria-label="Redo"><RedoIcon /></IconButton>
            <IconButton aria-label="More commands"><MoreIcon /></IconButton>
          </QuickAccess>
          <DocTitle><WorkbookIcon />Sex and HDL (3)<WideChevron color="#808080" /></DocTitle>
          <TitleActions>
            <IconButton aria-label="Search"><SearchIcon /></IconButton>
            <IconButton aria-label="Presence"><PersonIcon /></IconButton>
          </TitleActions>
        </TitleBar>
        <TabRow>
          <TabList>
            {TABS.map((t) => <Tab key={t} $active={t === "Home"}>{t}</Tab>)}
            <TellMe><BulbIcon />Tell me</TellMe>
          </TabList>
          <Actions>
            <ActionButton><CommentIcon />Comments</ActionButton>
            <ActionButton $primary><ShareIcon />Share<WideChevron color="#fff" sw={2} /></ActionButton>
          </Actions>
        </TabRow>
        <RibbonBody />
      </Chrome>

      <FormulaBar>
        <NameBox>
          <BarInput aria-label="Name box" defaultValue="F14" $width={100} />
          <Icon w={12} h={32} color="none">
            <path d="M0 10L6 0l6 10zM0 22h12L6 32z" fill="#666" />
          </Icon>
        </NameBox>
        <BarTools>
          <IconButton aria-label="Cancel">
            <Icon w={24} h={22} sw={4} color="#cfcfcf"><path d="M2 1l20 20M22 1L2 21" /></Icon>
          </IconButton>
          <IconButton aria-label="Enter">
            <Icon w={28} h={22} sw={4} color="#cfcfcf"><path d="M1 11l9 9L27 1" /></Icon>
          </IconButton>
          <Fx aria-label="Insert function">fx</Fx>
        </BarTools>
        <BarDivider />
        <BarInput aria-label="Formula" defaultValue="=QUARTILE(B2:B40,4)" />
        <BarEnd aria-label="Expand formula bar"><Triangle dir="down" w={14} h={10} /></BarEnd>
      </FormulaBar>
      <Splitter />

      <Spreadsheet />

      <SheetBar>
        <SheetNav>
          <IconButton aria-label="Previous sheet"><Triangle dir="left" color="#b5b5b5" w={14} h={20} /></IconButton>
          <IconButton aria-label="Next sheet"><Triangle dir="right" color="#b5b5b5" w={14} h={20} /></IconButton>
        </SheetNav>
        <SheetTab>Sheet1</SheetTab>
        <AddSheet aria-label="Add sheet">
          <Icon w={20} h={20} sw={4} color="#606060"><path d="M10 0v20M0 10h20" /></Icon>
        </AddSheet>
      </SheetBar>

      <StatusBar>
        <span>Ready</span>
        <StatusItem><A11yIcon />Accessibility: Good to go</StatusItem>
        <StatusRight>
          <ViewButton aria-label="Normal view" $active><GridViewIcon /></ViewButton>
          <ViewButton aria-label="Page layout view"><PageViewIcon /></ViewButton>
          <ViewButton aria-label="Page break preview"><BreakViewIcon /></ViewButton>
          <ZoomGroup>
            <IconButton aria-label="Zoom out"><Icon w={16} h={16} sw={4} color="#666"><path d="M0 8h16" /></Icon></IconButton>
            <Slider type="range" aria-label="Zoom" min={0} max={100} defaultValue={50} />
            <IconButton aria-label="Zoom in"><Icon w={16} h={16} sw={4} color="#666"><path d="M0 8h16M8 0v16" /></Icon></IconButton>
          </ZoomGroup>
          <ZoomValue>100%</ZoomValue>
        </StatusRight>
      </StatusBar>
    </Window>
  );
}
